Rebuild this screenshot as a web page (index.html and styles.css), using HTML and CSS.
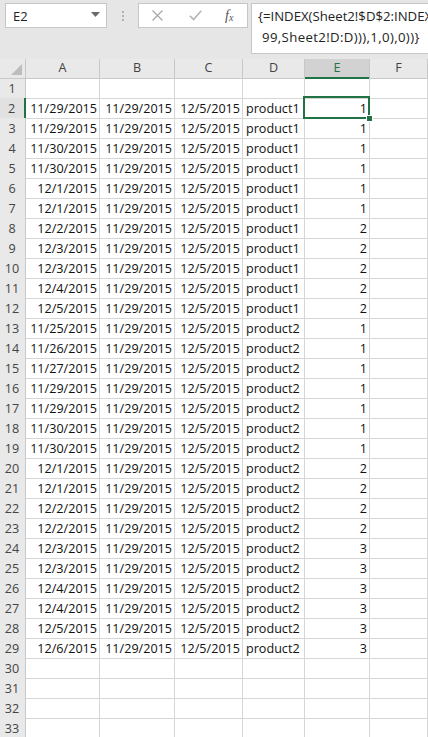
FILE: index.html
```html
<!DOCTYPE html>
<html>
<head>
<meta charset="utf-8">
<link rel="stylesheet" href="styles.css">
</head>
<body>
<div class="app">
  <div class="fbar">
    <div class="namebox">
      <span class="name">E2</span>
      <svg class="dd" width="9" height="5" viewBox="0 0 9 5"><path d="M0 0h9L4.5 5z" fill="#6a6a6a"/></svg>
    </div>
    <div class="dots"><i></i><i></i><i></i></div>
    <div class="btns">
      <svg class="x" width="11" height="11" viewBox="0 0 11 11"><path d="M0.5 0.5L10.5 10.5M10.5 0.5L0.5 10.5" stroke="#a8a8a8" stroke-width="1.3" fill="none"/></svg>
      <svg class="ok" width="13" height="11" viewBox="0 0 13 11"><path d="M0.8 5.8L4.6 9.6L12.2 0.8" stroke="#b4b4b4" stroke-width="1.6" fill="none"/></svg>
      <span class="fx">f<sub>x</sub></span>
    </div>
    <div class="formula">
      <div class="fl">{=INDEX(Sheet2!$D$2:INDEX</div>
      <div class="fl l2">99,Sheet2!D:D))),1,0),0))}</div>
    </div>
  </div>
  <div class="sheet">
    <div class="row hdr">
      <div class="c rh corner"><span class="tri"></span></div>
      <div class="c ch">A</div><div class="c ch">B</div><div class="c ch">C</div><div class="c ch">D</div><div class="c ch sel">E</div><div class="c ch">F</div>
    </div>
    <div class="row"><div class="c rh">1</div><div class="c"></div><div class="c"></div><div class="c"></div><div class="c"></div><div class="c"></div><div class="c"></div></div>
    <div class="row"><div class="c rh rsel">2</div><div class="c r">11/29/2015</div><div class="c r">11/29/2015</div><div class="c r">12/5/2015</div><div class="c l">product1</div><div class="c r active">1<span class="selbox"></span><span class="handle"></span></div><div class="c"></div></div>
    <div class="row"><div class="c rh">3</div><div class="c r">11/29/2015</div><div class="c r">11/29/2015</div><div class="c r">12/5/2015</div><div class="c l">product1</div><div class="c r">1</div><div class="c"></div></div>
    <div class="row"><div class="c rh">4</div><div class="c r">11/30/2015</div><div class="c r">11/29/2015</div><div class="c r">12/5/2015</div><div class="c l">product1</div><div class="c r">1</div><div class="c"></div></div>
    <div class="row"><div class="c rh">5</div><div class="c r">11/30/2015</div><div class="c r">11/29/2015</div><div class="c r">12/5/2015</div><div class="c l">product1</div><div class="c r">1</div><div class="c"></div></div>
    <div class="row"><div class="c rh">6</div><div class="c r">12/1/2015</div><div class="c r">11/29/2015</div><div class="c r">12/5/2015</div><div class="c l">product1</div><div class="c r">1</div><div class="c"></div></div>
    <div class="row"><div class="c rh">7</div><div class="c r">12/1/2015</div><div class="c r">11/29/2015</div><div class="c r">12/5/2015</div><div class="c l">product1</div><div class="c r">1</div><div class="c"></div></div>
    <div class="row"><div class="c rh">8</div><div class="c r">12/2/2015</div><div class="c r">11/29/2015</div><div class="c r">12/5/2015</div><div class="c l">product1</div><div class="c r">2</div><div class="c"></div></div>
    <div class="row"><div class="c rh">9</div><div class="c r">12/3/2015</div><div class="c r">11/29/2015</div><div class="c r">12/5/2015</div><div class="c l">product1</div><div class="c r">2</div><div class="c"></div></div>
    <div class="row"><div class="c rh">10</div><div class="c r">12/3/2015</div><div class="c r">11/29/2015</div><div class="c r">12/5/2015</div><div class="c l">product1</div><div class="c r">2</div><div class="c"></div></div>
    <div class="row"><div class="c rh">11</div><div class="c r">12/4/2015</div><div class="c r">11/29/2015</div><div class="c r">12/5/2015</div><div class="c l">product1</div><div class="c r">2</div><div class="c"></div></div>
    <div class="row"><div class="c rh">12</div><div class="c r">12/5/2015</div><div class="c r">11/29/2015</div><div class="c r">12/5/2015</div><div class="c l">product1</div><div class="c r">2</div><div class="c"></div></div>
    <div class="row"><div class="c rh">13</div><div class="c r">11/25/2015</div><div class="c r">11/29/2015</div><div class="c r">12/5/2015</div><div class="c l">product2</div><div class="c r">1</div><div class="c"></div></div>
    <div class="row"><div class="c rh">14</div><div class="c r">11/26/2015</div><div class="c r">11/29/2015</div><div class="c r">12/5/2015</div><div class="c l">product2</div><div class="c r">1</div><div class="c"></div></div>
    <div class="row"><div class="c rh">15</div><div class="c r">11/27/2015</div><div class="c r">11/29/2015</div><div class="c r">12/5/2015</div><div class="c l">product2</div><div class="c r">1</div><div class="c"></div></div>
    <div class="row"><div class="c rh">16</div><div class="c r">11/29/2015</div><div class="c r">11/29/2015</div><div class="c r">12/5/2015</div><div class="c l">product2</div><div class="c r">1</div><div class="c"></div></div>
    <div class="row"><div class="c rh">17</div><div class="c r">11/29/2015</div><div class="c r">11/29/2015</div><div class="c r">12/5/2015</div><div class="c l">product2</div><div class="c r">1</div><div class="c"></div></div>
    <div class="row"><div class="c rh">18</div><div class="c r">11/30/2015</div><div class="c r">11/29/2015</div><div class="c r">12/5/2015</div><div class="c l">product2</div><div class="c r">1</div><div class="c"></div></div>
    <div class="row"><div class="c rh">19</div><div class="c r">11/30/2015</div><div class="c r">11/29/2015</div><div class="c r">12/5/2015</div><div class="c l">product2</div><div class="c r">1</div><div class="c"></div></div>
    <div class="row"><div class="c rh">20</div><div class="c r">12/1/2015</div><div class="c r">11/29/2015</div><div class="c r">12/5/2015</div><div class="c l">product2</div><div class="c r">2</div><div class="c"></div></div>
    <div class="row"><div class="c rh">21</div><div class="c r">12/1/2015</div><div class="c r">11/29/2015</div><div class="c r">12/5/2015</div><div class="c l">product2</div><div class="c r">2</div><div class="c"></div></div>
    <div class="row"><div class="c rh">22</div><div class="c r">12/2/2015</div><div class="c r">11/29/2015</div><div class="c r">12/5/2015</div><div class="c l">product2</div><div class="c r">2</div><div class="c"></div></div>
    <div class="row"><div class="c rh">23</div><div class="c r">12/2/2015</div><div class="c r">11/29/2015</div><div class="c r">12/5/2015</div><div class="c l">product2</div><div class="c r">2</div><div class="c"></div></div>
    <div class="row"><div class="c rh">24</div><div class="c r">12/3/2015</div><div class="c r">11/29/2015</div><div class="c r">12/5/2015</div><div class="c l">product2</div><div class="c r">3</div><div class="c"></div></div>
    <div class="row"><div class="c rh">25</div><div class="c r">12/3/2015</div><div class="c r">11/29/2015</div><div class="c r">12/5/2015</div><div class="c l">product2</div><div class="c r">3</div><div class="c"></div></div>
    <div class="row"><div class="c rh">26</div><div class="c r">12/4/2015</div><div class="c r">11/29/2015</div><div class="c r">12/5/2015</div><div class="c l">product2</div><div class="c r">3</div><div class="c"></div></div>
    <div class="row"><div class="c rh">27</div><div class="c r">12/4/2015</div><div class="c r">11/29/2015</div><div class="c r">12/5/2015</div><div class="c l">product2</div><div class="c r">3</div><div class="c"></div></div>
    <div class="row"><div class="c rh">28</div><div class="c r">12/5/2015</div><div class="c r">11/29/2015</div><div class="c r">12/5/2015</div><div class="c l">product2</div><div class="c r">3</div><div class="c"></div></div>
    <div class="row"><div class="c rh">29</div><div class="c r">12/6/2015</div><div class="c r">11/29/2015</div><div class="c r">12/5/2015</div><div class="c l">product2</div><div class="c r">3</div><div class="c"></div></div>
    <div class="row"><div class="c rh">30</div><div class="c"></div><div class="c"></div><div class="c"></div><div class="c"></div><div class="c"></div><div class="c"></div></div>
    <div class="row"><div class="c rh">31</div><div class="c"></div><div class="c"></div><div class="c"></div><div class="c"></div><div class="c"></div><div class="c"></div></div>
    <div class="row"><div class="c rh">32</div><div class="c"></div><div class="c"></div><div class="c"></div><div class="c"></div><div class="c"></div><div class="c"></div></div>
    <div class="row"><div class="c rh">33</div><div class="c"></div><div class="c"></div><div class="c"></div><div class="c"></div><div class="c"></div><div class="c"></div></div>
  </div>
</div>
</body>
</html>
```
FILE: styles.css
```css
* { box-sizing: border-box; }
html, body { margin: 0; padding: 0; }
body { width: 428px; height: 737px; overflow: hidden; background: #fff; font-family: "Open Sans", "Liberation Sans", sans-serif; }
.app { width: 428px; }

.fbar {
  height: 59px;
  background: #e6e6e6;
  display: flex;
  align-items: flex-start;
  padding: 3px 0 0 5px;
}
.namebox {
  width: 102px; height: 25px;
  background: #fff;
  border: 1px solid #c6c6c6;
  display: flex; align-items: center; justify-content: space-between;
  padding: 0 6px 0 7px;
  font-size: 13px; color: #222;
}
.dd { margin-top: -2px; }
.dots {
  width: 31px; height: 25px;
  display: flex; flex-direction: column; align-items: center; justify-content: center; gap: 2px;
}
.dots i { display: block; width: 2px; height: 2px; background: #b0b0b0; }
.btns {
  width: 110px; height: 25px;
  background: #fff;
  border: 1px solid #c6c6c6;
  display: flex; align-items: center;
  padding-left: 13px;
}
.btns .ok { margin-left: 26px; }
.fx {
  margin-left: 23px;
  font-family: "Liberation Serif", serif;
  font-style: italic;
  font-size: 14px; color: #555;
}
.fx sub { font-size: 10px; vertical-align: -1px; }
.formula {
  margin-left: 3px;
  flex: 1;
  min-width: 0;
  height: 51px;
  background: #fff;
  border: 1px solid #c6c6c6;
  border-right: none;
  padding: 2px 0 0 6px;
  font-size: 13.2px;
  color: #222;
  line-height: 21px;
  overflow: hidden;
  white-space: nowrap;
}
.l2 { padding-left: 4px; letter-spacing: 0.37px; }

.sheet { font-size: 12.6px; color: #111; }
.row {
  display: grid;
  grid-template-columns: 26px 74px 75px 68px 62px 65px 58px;
  height: 20px;
}
.row.hdr { height: 19px; }
.c {
  border-right: 1px solid #d6d6d6;
  border-bottom: 1px solid #d6d6d6;
  line-height: 19px;
  white-space: nowrap;
  padding-top: 1px;
}
.c.r { text-align: right; padding-right: 2px; }
.c.l { text-align: left; padding-left: 3px; }
.rh, .ch {
  background: #e9e9e9;
  border-right: 1px solid #c8c8c8;
  border-bottom: 1px solid #c8c8c8;
  color: #444;
  text-align: center;
}
.ch { line-height: 18px; padding-top: 0; }
.ch.sel { background: #d2d2d2; border-bottom: 2px solid #217346; color: #217346; }
.rh { padding-right: 1px; }
.rh.rsel { background: #e1e1e1; border-right: 2px solid #217346; }
.corner { position: relative; }
.tri {
  position: absolute; right: 3px; bottom: 3px;
  width: 0; height: 0;
  border-left: 11px solid transparent;
  border-bottom: 11px solid #bdbdbd;
}
.active { position: relative; }
.selbox {
  position: absolute; left: -2px; top: -2px; right: -1px; bottom: -1px;
  border: 2px solid #217346;
  pointer-events: none;
}
.handle {
  position: absolute; right: -4px; bottom: -4px;
  width: 5px; height: 5px;
  box-sizing: content-box;
  background: #217346;
  border: 1px solid #fff;
}
```
